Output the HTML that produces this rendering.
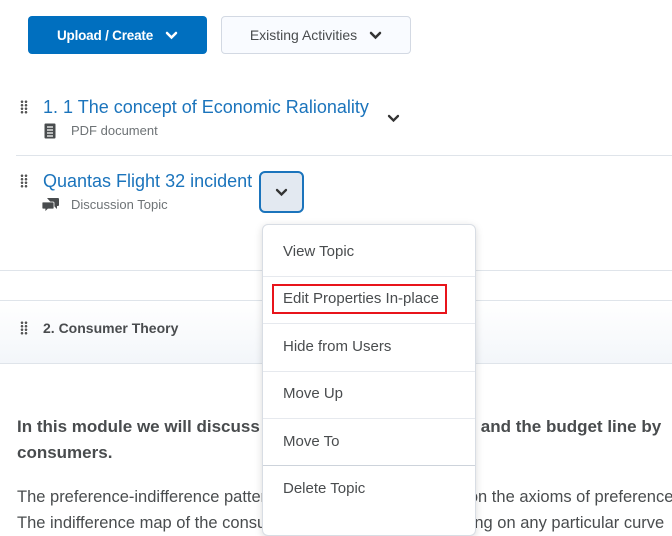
<!DOCTYPE html>
<html><head><style>
*{margin:0;padding:0;box-sizing:border-box}
body{width:672px;height:534px;overflow:hidden;background:#fff;font-family:"Liberation Sans",sans-serif;position:relative;color:#494c4e}
.a{position:absolute;white-space:nowrap}
.btn{position:absolute;top:16px;height:38px;border-radius:4px;font-size:14px;font-weight:bold;display:flex;align-items:center;justify-content:center;gap:12px}
.grip{position:absolute;width:8px;height:14px;background-image:radial-gradient(circle,#555 1.2px,transparent 1.4px);background-size:4px 3.5px}
.title{font-size:18px;color:#1b74bc}
.sub{font-size:13px;color:#6e7376}
.line{position:absolute;height:1px;background:#dfe4ea}
.menu{position:absolute;left:262px;top:224px;width:214px;height:312px;background:#fff;border:1px solid #d8dde4;border-radius:6px;box-shadow:0 2px 8px rgba(0,0,0,.15)}
.mi{position:absolute;left:20px;font-size:15px;color:#494c4e}
.ms{position:absolute;left:0;right:0;height:1px;background:#e6e9ee}
p{position:absolute;left:17px;font-size:16px;white-space:nowrap}
</style></head><body>
<div class="btn" style="left:28px;width:179px;background:#006fbf;color:#fff;font-size:13.5px;letter-spacing:-0.2px">Upload / Create <svg width="13" height="9" viewBox="0 0 13 9"><path d="M2 2l4.5 4.5L11 2" stroke="#fff" stroke-width="2.5" fill="none" stroke-linecap="round"/></svg></div>
<div class="btn" style="left:221px;width:190px;background:#f9fbff;border:1px solid #d3d9e3;color:#494c4e;font-weight:normal;font-size:14px">Existing Activities <svg width="13" height="9" viewBox="0 0 13 9"><path d="M2 2l4.5 4.5L11 2" stroke="#333" stroke-width="2.5" fill="none" stroke-linecap="round"/></svg></div>

<div class="grip" style="left:20px;top:100px"></div>
<div class="a title" style="left:43px;top:97px">1. 1 The concept of Economic Ralionality</div>
<svg class="a" style="left:387px;top:114px" width="13" height="9" viewBox="0 0 13 9"><path d="M2 2l4.5 4.5L11 2" stroke="#333" stroke-width="2.3" fill="none" stroke-linecap="round"/></svg>
<svg class="a" style="left:44px;top:123px" width="12" height="16" viewBox="0 0 12 16"><rect x="0.5" y="0.5" width="11" height="15" rx="1" fill="#494c4e"/><path d="M3 4h6M3 7h6M3 10h6M3 13h6" stroke="#fff" stroke-width="1.2"/></svg>
<div class="a sub" style="left:71px;top:123px">PDF document</div>
<div class="line" style="left:16px;top:155px;width:656px"></div>

<div class="grip" style="left:20px;top:174px"></div>
<div class="a title" style="left:43px;top:171px">Quantas Flight 32 incident</div>
<div class="a" style="left:259px;top:171px;width:45px;height:42px;border:2px solid #1b74bc;border-radius:6px;background:#e3e9f1"></div>
<svg class="a" style="left:275px;top:188px" width="13" height="9" viewBox="0 0 13 9"><path d="M2 2l4.5 4.5L11 2" stroke="#333" stroke-width="2.3" fill="none" stroke-linecap="round"/></svg>
<svg class="a" style="left:42px;top:197px" width="18" height="16" viewBox="0 0 18 16"><path d="M5 1h11a1 1 0 0 1 1 1v6a1 1 0 0 1-1 1h-1v3l-3-3" fill="#494c4e"/><path d="M1 5h10a1 1 0 0 1 1 1v5a1 1 0 0 1-1 1H6l-3 3v-3H1a1 1 0 0 1-1-1V6a1 1 0 0 1 1-1z" fill="#494c4e" stroke="#fff" stroke-width="0.8"/></svg>
<div class="a sub" style="left:71px;top:197px">Discussion Topic</div>

<div class="line" style="left:0;top:270px;width:672px"></div>
<div class="a" style="left:0;top:300px;width:672px;height:64px;background:linear-gradient(#fff,#f3f6fa);border-top:1px solid #dfe4ea;border-bottom:1px solid #dfe4ea"></div>
<div class="grip" style="left:20px;top:321px"></div>
<div class="a" style="left:43px;top:320px;font-size:14px;font-weight:bold;color:#494c4e">2. Consumer Theory</div>

<p style="top:417px;font-weight:bold;font-size:17px">In this module we will discuss about the choice of goods and the budget line by</p>
<p style="top:443px;font-weight:bold;font-size:17px">consumers.</p>
<p style="top:488px;font-size:16.5px">The preference-indifference pattern of the consumer is based on the axioms of preferences</p>
<p style="top:514px;font-size:16.5px">The indifference map of the consumer shows that the points lying on any particular curve</p>

<div class="menu">
<div class="mi" style="top:18px">View Topic</div>
<div class="ms" style="top:51px"></div>
<div class="a" style="left:9px;top:59px;width:175px;height:30px;border:2px solid #e8141b"></div>
<div class="mi" style="top:65px">Edit Properties In-place</div>
<div class="ms" style="top:98px"></div>
<div class="mi" style="top:113px">Hide from Users</div>
<div class="ms" style="top:146px"></div>
<div class="mi" style="top:160px">Move Up</div>
<div class="ms" style="top:193px"></div>
<div class="mi" style="top:208px">Move To</div>
<div class="ms" style="top:240px;background:#cdd3db"></div>
<div class="mi" style="top:255px">Delete Topic</div>
</div>
</body></html>
